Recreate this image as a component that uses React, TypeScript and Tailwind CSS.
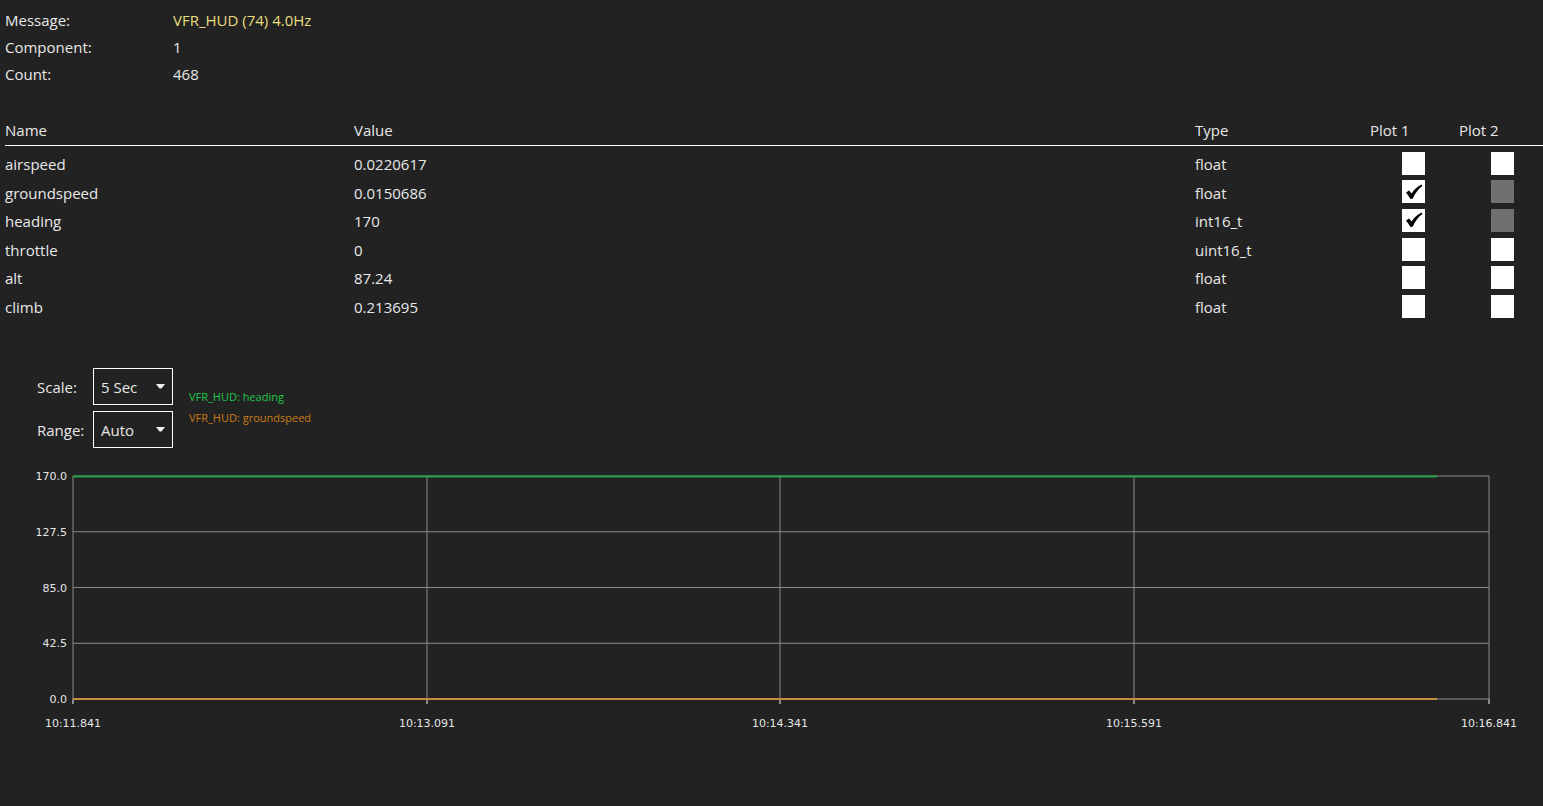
import React from "react";

type Field = {
  name: string;
  value: string;
  type: string;
  plot1: boolean;
  plot2Disabled: boolean;
};

const fields: Field[] = [
  { name: "airspeed", value: "0.0220617", type: "float", plot1: false, plot2Disabled: false },
  { name: "groundspeed", value: "0.0150686", type: "float", plot1: true, plot2Disabled: true },
  { name: "heading", value: "170", type: "int16_t", plot1: true, plot2Disabled: true },
  { name: "throttle", value: "0", type: "uint16_t", plot1: false, plot2Disabled: false },
  { name: "alt", value: "87.24", type: "float", plot1: false, plot2Disabled: false },
  { name: "climb", value: "0.213695", type: "float", plot1: false, plot2Disabled: false },
];

function CheckBox({ checked, disabled }: { checked?: boolean; disabled?: boolean }) {
  return (
    <div
      className={`flex h-[23px] w-[23px] items-center justify-center ${
        disabled ? "bg-[#707070]" : "bg-white"
      }`}
    >
      {checked && (
        <svg width="18" height="16" viewBox="0 0 18 16">
          <path
            d="M1 8.6 L4.2 6.6 L6.6 9.6 C9 5.8 12.4 2.6 16.6 0.6 L17.4 2 C13.4 4.8 10.4 8.8 7.8 14.6 L5.8 15.2 Z"
            fill="#000"
          />
        </svg>
      )}
    </div>
  );
}

function Combo({ label }: { label: string }) {
  return (
    <div className="flex h-[37px] w-[80px] items-center justify-between border border-white pl-[7px] pr-[7px]">
      <span className="pt-[2px]">{label}</span>
      <svg width="9" height="5" viewBox="0 0 9 5">
        <path d="M0 0 H9 L5.5 4.5 H3.5 Z" fill="#f0f0f0" />
      </svg>
    </div>
  );
}

const gridX = [73, 427, 780, 1134, 1489];
const gridY = [476, 531.75, 587.5, 643.25, 699];
const yLabels = ["170.0", "127.5", "85.0", "42.5", "0.0"];
const xLabels = ["10:11.841", "10:13.091", "10:14.341", "10:15.591", "10:16.841"];

function Chart() {
  return (
    <svg width="1543" height="300" viewBox="0 449 1543 300" className="mt-[1px] block">
      {gridY.map((y) => (
        <line key={y} x1={73} x2={1489} y1={y} y2={y} stroke="#8a8a8a" strokeWidth="1" />
      ))}
      {gridX.map((x) => (
        <g key={x}>
          <line x1={x} x2={x} y1={476} y2={699} stroke="#8a8a8a" strokeWidth="1" />
          <line x1={x} x2={x} y1={699} y2={704} stroke="#8a8a8a" strokeWidth="2" />
        </g>
      ))}
      <line x1={73} x2={1437} y1={476.5} y2={476.5} stroke="#23a046" strokeWidth="2" />
      <line x1={73} x2={1437} y1={699} y2={699} stroke="#c98b3d" strokeWidth="2" />
      {yLabels.map((l, i) => (
        <text
          key={l}
          x={67}
          y={gridY[i] + 4}
          textAnchor="end"
          fontSize="11"
          fontFamily="'DejaVu Sans', sans-serif"
          fill="#e6e6e6"
        >
          {l}
        </text>
      ))}
      {xLabels.map((l, i) => (
        <text
          key={l}
          x={gridX[i]}
          y={727}
          textAnchor="middle"
          fontSize="11"
          fontFamily="'DejaVu Sans', sans-serif"
          fill="#e6e6e6"
        >
          {l}
        </text>
      ))}
    </svg>
  );
}

export default function App() {
  return (
    <div
      className="h-[806px] w-full overflow-hidden bg-[#222222] text-[15px] text-[#e8e8e8]"
      style={{ fontFamily: "'Open Sans', sans-serif" }}
    >
      {/* Message info */}
      <div className="pt-[7px] pl-[5px]">
        {[
          ["Message:", "VFR_HUD (74) 4.0Hz"],
          ["Component:", "1"],
          ["Count:", "468"],
        ].map(([k, v], i) => (
          <div key={k} className="flex h-[27px] items-center">
            <span className="w-[168px]">{k}</span>
            <span className={i === 0 ? "text-[#e9dd7e]" : ""}>{v}</span>
          </div>
        ))}
      </div>

      {/* Fields table */}
      <div className="mt-[28px] pl-[5px]">
        <div className="flex h-[30px] items-center border-b border-white">
          <span className="w-[349px]">Name</span>
          <span className="w-[841px]">Value</span>
          <span className="w-[175px]">Type</span>
          <span className="w-[89px]">Plot 1</span>
          <span>Plot 2</span>
        </div>
        <div className="pt-[3px]">
          {fields.map((f) => (
            <div key={f.name} className="flex h-[28.6px] items-center">
              <span className="w-[349px] pt-[2px]">{f.name}</span>
              <span className="w-[841px] pt-[2px]">{f.value}</span>
              <span className="w-[175px] pt-[2px]">{f.type}</span>
              <div className="w-[89px] pl-[32px]">
                <CheckBox checked={f.plot1} />
              </div>
              <div className="pl-[32px]">
                <CheckBox disabled={f.plot2Disabled} />
              </div>
            </div>
          ))}
        </div>
      </div>

      {/* Plot controls */}
      <div className="mt-[47px] flex pl-[37px]">
        <div className="flex flex-col gap-[6px]">
          <div className="flex items-center">
            <span className="w-[56px] pt-[2px]">Scale:</span>
            <Combo label="5 Sec" />
          </div>
          <div className="flex items-center">
            <span className="w-[56px] pt-[2px]">Range:</span>
            <Combo label="Auto" />
          </div>
        </div>
        <div className="ml-[16px] mt-[21px] flex flex-col gap-[6px] text-[11px] leading-[15px]">
          <span className="text-[#1fc84b]">VFR_HUD: heading</span>
          <span className="text-[#c97b14]">VFR_HUD: groundspeed</span>
        </div>
      </div>

      <Chart />
    </div>
  );
}
